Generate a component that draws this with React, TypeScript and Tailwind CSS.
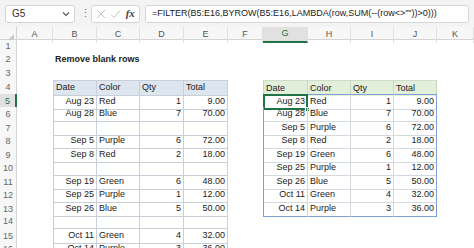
const cols = ["", "A", "B", "C", "D", "E", "F", "G", "H", "I", "J", "K"];

type Row = [string, string, string, string] | null;

const leftData: Row[] = [
  ["Aug 23", "Red", "1", "9.00"],
  ["Aug 28", "Blue", "7", "70.00"],
  null,
  ["Sep 5", "Purple", "6", "72.00"],
  ["Sep 8", "Red", "2", "18.00"],
  null,
  ["Sep 19", "Green", "6", "48.00"],
  ["Sep 25", "Purple", "1", "12.00"],
  ["Sep 26", "Blue", "5", "50.00"],
  null,
  ["Oct 11", "Green", "4", "32.00"],
  ["Oct 14", "Purple", "3", "36.00"],
];

const rightData: Row[] = leftData.filter((r) => r !== null);
const head = ["Date", "Color", "Qty", "Total"];

const gridCols =
  "grid grid-cols-[17px_36px_44px_43px_44px_44px_35px_45px_43px_43px_43px_1fr]";

function cellText(c: number, text: string) {
  // date, qty, total right aligned; color left
  const right = c === 0 || c === 2 || c === 3;
  return (
    <span
      className={`block w-full truncate px-[2px] ${right ? "text-right" : "text-left"}`}
    >
      {text}
    </span>
  );
}

function Cell({ r, c }: { r: number; c: number }) {
  const base = "relative flex items-center overflow-visible";
  if (c === 0) {
    const sel = r === 5;
    return (
      <div
        className={`${base} justify-center text-[9px] border-r ${
          sel
            ? "bg-[#e1e1e1] text-[#217346] border-r-2 border-r-[#217346]"
            : "bg-[#f7f7f7] text-[#666] border-r-[#d4d4d4]"
        }`}
      >
        {r}
      </div>
    );
  }
  if (r === 2 && c === 2) {
    return (
      <div className={base}>
        <span className="whitespace-nowrap pl-[2px] font-bold text-[#222]">
          Remove blank rows
        </span>
      </div>
    );
  }
  // left table
  if (c >= 2 && c <= 5 && r >= 4) {
    const i = c - 2;
    const cls = `${base} border-r border-b border-[#c9cfd8] ${i === 0 ? "border-l" : ""} ${
      r === 4 ? "border-t bg-[#dde5ef]" : ""
    }`;
    if (r === 4) return <div className={cls}>{cellText(1, head[i])}</div>;
    const row = leftData[r - 5];
    return <div className={cls}>{row ? cellText(i, row[i]) : null}</div>;
  }
  // right table
  if (c >= 7 && c <= 10 && r >= 4 && r <= 13) {
    const i = c - 7;
    if (r === 4) {
      return (
        <div
          className={`${base} bg-[#e2efda] border-r border-[#c6d9b8] ${
            i === 0 ? "border-l" : ""
          } border-t border-t-[#d0dcc8]`}
        >
          {cellText(1, head[i])}
        </div>
      );
    }
    const row = rightData[r - 5];
    const cls = `${base} border-b border-r ${
      r === 13 ? "border-b-[#7f9fd6]" : "border-b-[#d5d9e0]"
    } ${i === 3 ? "border-r-[#7f9fd6]" : "border-r-[#d5d9e0]"} ${
      i === 0 ? "border-l border-l-[#7f9fd6]" : ""
    } ${r === 5 ? "border-t border-t-[#7f9fd6]" : ""}`;
    return (
      <div className={cls}>
        {row ? cellText(i, row[i]) : null}
        {r === 5 && i === 0 && (
          <div className="pointer-events-none absolute -left-[1px] -top-[1px] -right-[1px] -bottom-[1px] border-2 border-[#217346]">
            <div className="absolute -right-[4px] -bottom-[4px] h-[5px] w-[5px] border border-white bg-[#217346]" />
          </div>
        )}
      </div>
    );
  }
  return <div className={base} />;
}

export default function App() {
  const rows = Array.from({ length: 16 }, (_, k) => k + 1);
  return (
    <div className="h-[248px] w-[474px] overflow-hidden bg-white font-['Liberation_Sans',Arial,sans-serif] text-[9px] text-[#222]">
      {/* formula bar */}
      <div className="flex h-[27px] items-center gap-[5px] bg-[#f3f3f3] px-[5px]">
        <div className="flex h-[18px] w-[70px] items-center justify-between rounded-[3px] border border-[#d6d6d6] bg-white pl-[6px] pr-[4px] text-[10px] text-[#333]">
          <span>G5</span>
          <svg width="8" height="6" viewBox="0 0 8 6" fill="none">
            <path d="M1 1.5l3 3 3-3" stroke="#555" strokeWidth="1.1" />
          </svg>
        </div>
        <span className="w-[6px] text-center text-[11px] leading-none text-[#777]">⋮</span>
        <div className="flex h-[18px] w-[49px] items-center justify-around rounded-[3px] border border-[#d6d6d6] bg-white px-[2px]">
          <svg width="10" height="10" viewBox="0 0 10 10" fill="none">
            <path d="M1 1l8 8M9 1L1 9" stroke="#c4c4c4" strokeWidth="1" />
          </svg>
          <svg width="11" height="10" viewBox="0 0 11 10" fill="none">
            <path d="M1 5.5l3 3L10 1.5" stroke="#c4c4c4" strokeWidth="1" />
          </svg>
          <span className="font-['Liberation_Serif',serif] text-[11px] italic font-bold text-[#444]">
            fx
          </span>
        </div>
        <div className="flex h-[18px] flex-1 items-center rounded-[3px] border border-[#d6d6d6] bg-white pl-[6px] text-[9px] text-[#222] whitespace-nowrap overflow-hidden">
          =FILTER(B5:E16,BYROW(B5:E16,LAMBDA(row,SUM(--(row&lt;&gt;""))&gt;0)))
        </div>
      </div>
      {/* column headers */}
      <div className={`${gridCols} h-[13px] bg-[#f7f7f7] border-b border-[#d4d4d4]`}>
        {cols.map((l, c) => (
          <div
            key={c}
            className={`relative flex items-center justify-center text-[9px] ${
              c === 7
                ? "bg-[#e1e1e1] text-[#217346] border-b-2 border-[#217346]"
                : "text-[#555]"
            } ${c > 0 ? "border-r border-r-[#e0e0e0]" : "border-r border-r-[#d4d4d4]"}`}
          >
            {c === 0 ? (
              <svg width="8" height="8" viewBox="0 0 8 8" className="absolute bottom-[1px] right-[2px]">
                <path d="M8 0L8 8L0 8Z" fill="#c8c8c8" />
              </svg>
            ) : (
              l
            )}
          </div>
        ))}
      </div>
      {/* grid rows */}
      {rows.map((r) => (
        <div key={r} className={`${gridCols} ${r % 2 === 1 ? "h-[13px]" : "h-[14px]"}`}>
          {cols.map((_, c) => (
            <Cell key={c} r={r} c={c} />
          ))}
        </div>
      ))}
    </div>
  );
}
